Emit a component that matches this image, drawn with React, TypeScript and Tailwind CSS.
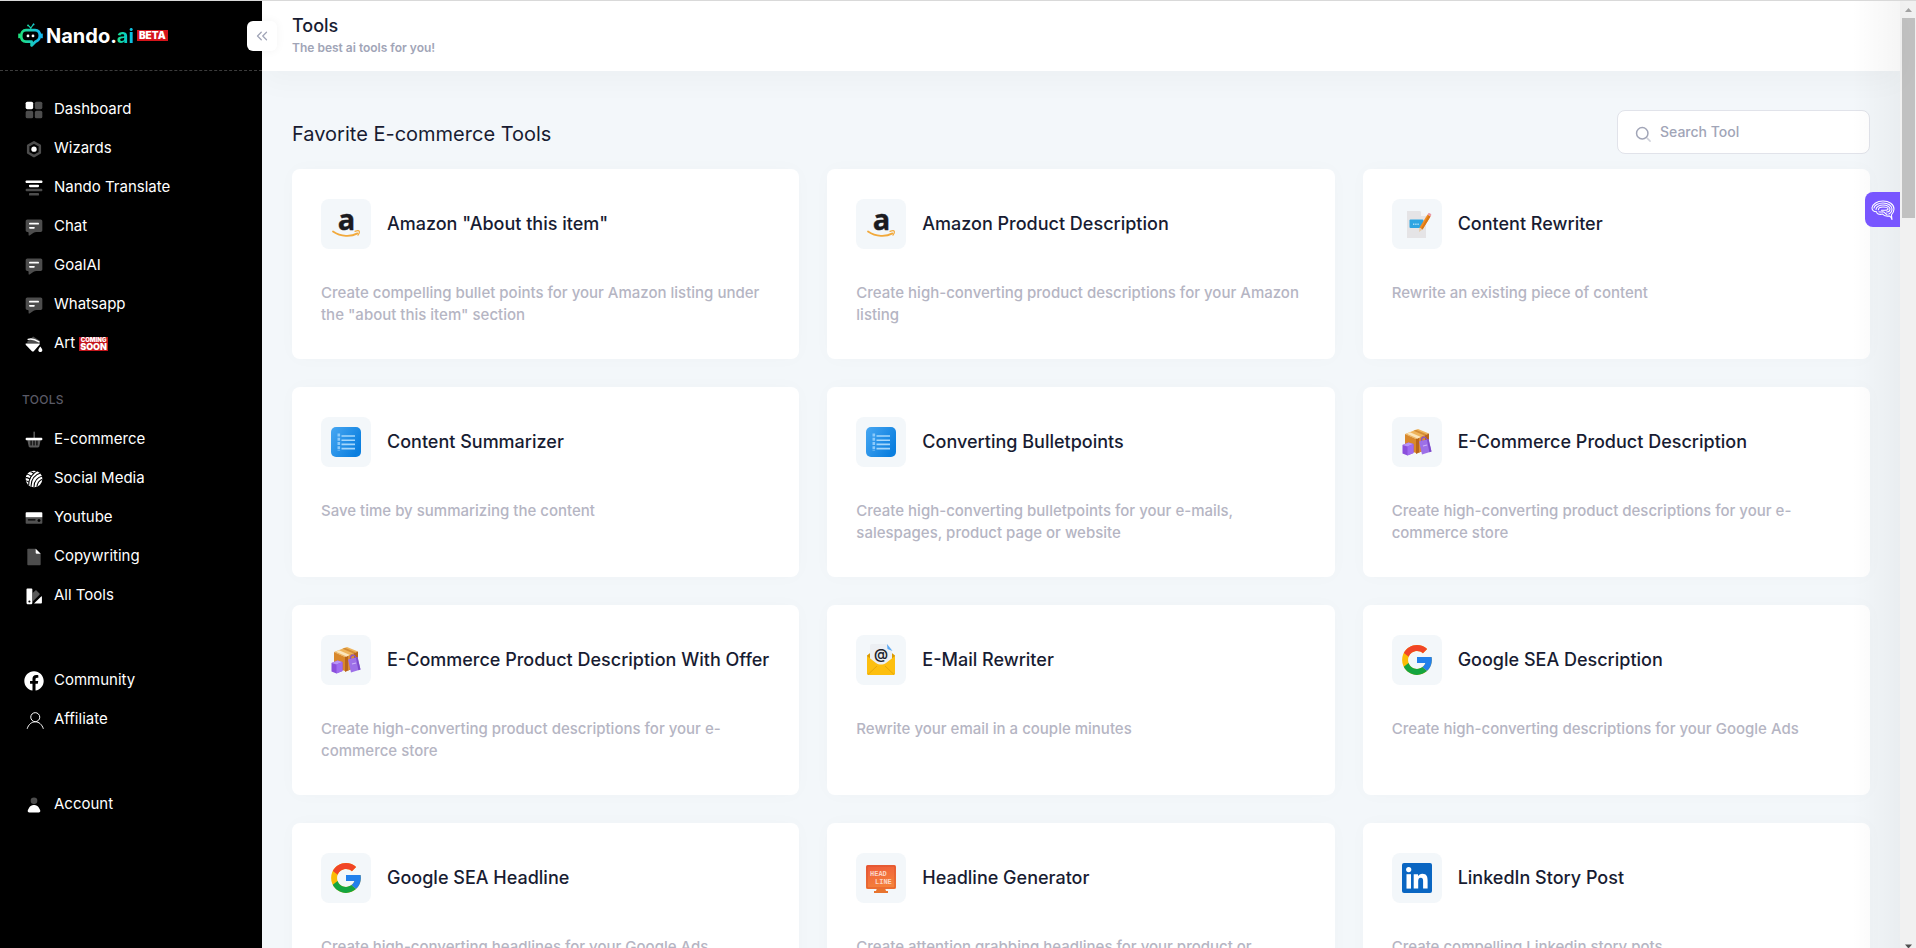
import React from 'react';
import { ChevronsLeft } from 'lucide-react';
import { FaFacebook } from 'react-icons/fa';

interface NavItem {
  label: string;
  icon: React.FC;
  badge?: boolean;
}

interface Tool {
  title: string;
  description: string;
  icon: React.FC;
}

const NavSvg: React.FC<{ children: React.ReactNode }> = ({ children }) => (
  <svg viewBox="0 0 24 24" fill="none" className="w-5 h-5">
    {children}
  </svg>
);

const DashboardIcon = () => (
  <NavSvg>
    <rect x="2" y="2" width="9" height="9" rx="2" fill="white" />
    <rect x="13" y="2" width="9" height="9" rx="2" fill="white" opacity="0.3" />
    <rect x="13" y="13" width="9" height="9" rx="2" fill="white" opacity="0.3" />
    <rect x="2" y="13" width="9" height="9" rx="2" fill="white" opacity="0.3" />
  </NavSvg>
);

const WizardIcon = () => (
  <NavSvg>
    <path d="M12 4L19 8V16.5L12 20.5L5 16.5V8Z" stroke="white" strokeWidth="3" strokeLinejoin="round" opacity="0.3" />
    <circle cx="12" cy="12.2" r="3.2" fill="white" />
  </NavSvg>
);

const TranslateIcon = () => (
  <NavSvg>
    <rect x="2" y="3" width="20" height="3" rx="1" fill="white" />
    <rect x="6" y="8" width="12" height="3" rx="1" fill="white" />
    <rect x="2" y="13" width="20" height="3" rx="1" fill="white" opacity="0.3" />
    <rect x="6" y="18" width="12" height="3" rx="1" fill="white" opacity="0.3" />
  </NavSvg>
);

const ChatIcon = () => (
  <NavSvg>
    <path
      opacity="0.3"
      d="M20 3H4C2.9 3 2 3.9 2 5V16C2 17.1 2.9 18 4 18H4.5C5.05 18 5.5 18.45 5.5 19V21.5C5.5 22.14 6.21 22.53 6.74 22.17L11.49 19C12.47 18.35 13.63 18 14.82 18H20C21.1 18 22 17.1 22 16V5C22 3.9 21.1 3 20 3Z"
      fill="white"
    />
    <rect x="6" y="12" width="7" height="2" rx="1" fill="white" />
    <rect x="6" y="7" width="12" height="2" rx="1" fill="white" />
  </NavSvg>
);

const ArtIcon = () => (
  <NavSvg>
    <path d="M4 9L11 3L19 8V11H4Z" fill="white" opacity="0.3" />
    <path d="M5 6.5C9 5 14 7 18 9.5" stroke="white" strokeWidth="1.6" strokeLinecap="round" />
    <path d="M2 11.5H18.5C19 11.5 19.2 12 18.8 12.5L12 20.3C11.2 21.2 10 21.2 9.2 20.3L2 13Z" fill="white" />
    <path d="M19.5 15C20.8 16.8 22 18 22 19.4C22 20.8 20.9 21.6 19.6 21.6C18.3 21.6 17.2 20.8 17.2 19.4C17.2 18 18.4 16.8 19.5 15Z" fill="white" />
  </NavSvg>
);

const BasketIcon = () => (
  <NavSvg>
    <rect x="11.4" y="2" width="1.6" height="8" fill="white" opacity="0.4" />
    <path
      d="M4 12H20L18.4 19.6C18.3 20.4 17.6 21 16.8 21H7.2C6.4 21 5.7 20.4 5.6 19.6Z"
      fill="white"
      opacity="0.35"
    />
    <path d="M8.5 13V18M12 13V18M15.5 13V18" stroke="black" strokeWidth="1.4" strokeLinecap="round" />
    <rect x="2" y="9.4" width="20" height="3" rx="1" fill="white" />
  </NavSvg>
);

const SocialIcon = () => (
  <NavSvg>
    <clipPath id="social-ball">
      <circle cx="12" cy="12" r="10" />
    </clipPath>
    <circle cx="12" cy="12" r="10" fill="white" />
    <g clipPath="url(#social-ball)" stroke="black" strokeWidth="1.3">
      <path d="M12 23C11.5 15 15 10 23 8" />
      <path d="M15.5 23C15.5 17 18 13.5 23 12" />
      <path d="M8.6 23C7.6 13.5 12 7 22 4" />
      <path d="M5.5 20C5.5 10.5 10 5 18 1" />
      <path d="M1 6C4.5 6 7 7 9 8.8" />
      <path d="M1 10C4 10 5.6 10.6 7.4 12" />
      <path d="M1 14C3.4 14 4.6 14.6 6 15.8" />
      <path d="M6 2.6C8.6 3 10.4 4 12 5.4" />
    </g>
  </NavSvg>
);

const CardIcon = () => (
  <NavSvg>
    <path d="M2 11H22V18C22 18.6 21.6 19 21 19H3C2.4 19 2 18.6 2 18Z" fill="white" opacity="0.32" />
    <rect x="4.5" y="13.4" width="9.5" height="1.6" rx="0.8" fill="black" />
    <circle cx="18" cy="15" r="1.8" fill="black" />
    <path d="M3 5H21C21.6 5 22 5.4 22 6V11H2V6C2 5.4 2.4 5 3 5Z" fill="white" />
  </NavSvg>
);

const FileIcon = () => (
  <NavSvg>
    <path opacity="0.3" d="M19 22H5C4.4 22 4 21.6 4 21V3C4 2.4 4.4 2 5 2H14L20 8V21C20 21.6 19.6 22 19 22Z" fill="white" />
    <path d="M15 8H20L14 2V7C14 7.6 14.4 8 15 8Z" fill="white" />
  </NavSvg>
);

const SwatchIcon = () => (
  <NavSvg>
    <path d="M10.5 8.5L13.6 5.4C14 5 14.6 5 15 5.4L18.6 9C19 9.4 19 10 18.6 10.4L10.5 18.5Z" fill="white" opacity="0.35" />
    <path d="M12 21L20.6 12.6C21 12.2 21.5 12.5 21.5 13V20C21.5 20.6 21.1 21 20.5 21Z" fill="white" />
    <path
      fillRule="evenodd"
      d="M4 3H9C9.6 3 10 3.4 10 4V20C10 21.1 9.1 22 8 22H5C3.9 22 3 21.1 3 20V4C3 3.4 3.4 3 4 3ZM6.5 17.3A1.3 1.3 0 1 0 6.5 19.9A1.3 1.3 0 1 0 6.5 17.3Z"
      fill="white"
    />
  </NavSvg>
);

const FacebookIcon = () => <FaFacebook className="w-5 h-5" />;

const AffiliateIcon = () => (
  <svg viewBox="-2 -2 24 24" fill="none" stroke="white" strokeWidth="1.2" className="w-5 h-5">
    <circle cx="11.5" cy="6.6" r="5.4" />
    <path d="M1.8 20.5C3.4 15.4 7 12.2 11.5 12.2C16 12.2 19.6 15.4 21.2 20.5" />
  </svg>
);

const AccountIcon = () => (
  <NavSvg>
    <rect x="8" y="3" width="8" height="8" rx="4" fill="white" opacity="0.3" />
    <path
      d="M6.3 15.1C7.3 13.2 9.4 12 11.5 12H12.5C14.6 12 16.7 13.2 17.7 15.1L19.3 18C20.1 19.4 19.1 21 17.6 21H6.4C4.9 21 3.9 19.4 4.7 18Z"
      fill="white"
    />
  </NavSvg>
);

const AmazonIcon = () => (
  <svg viewBox="0 0 34 34" className="w-[34px] h-[34px] overflow-visible">
    <text x="17.5" y="22.5" textAnchor="middle" fontFamily="Open Sans, sans-serif" fontWeight="700" fontSize="29" fill="#1b1b1f" stroke="#1b1b1f" strokeWidth="0.4">
      a
    </text>
    <path d="M4 24.5C12 30 22 30 28.5 26.4" stroke="#f2a93b" strokeWidth="1.8" fill="none" strokeLinecap="round" />
    <path d="M26 24.4C28 23.6 30 23.8 30.3 24.3C30.6 25 30 27 29 28.2" stroke="#f2a93b" strokeWidth="1.2" fill="none" strokeLinecap="round" />
  </svg>
);

const RewriterIcon = () => (
  <svg viewBox="0 0 34 34" className="w-[34px] h-[34px]">
    <path d="M7 4H20L26 9V31H7Z" fill="#e5e4e6" />
    <path d="M21 4L26 9H21Z" fill="#f4f4f5" />
    <rect x="9.5" y="12.5" width="14" height="8.5" rx="1" fill="#2fa5e2" />
    <path d="M13 17.2H19" stroke="#a9dcf6" strokeWidth="1.4" strokeDasharray="1.4 0.8" />
    <path d="M27.5 7.5L30.5 9.5L22.5 22.5L19.5 20.5Z" fill="#f08c22" />
    <path d="M28.6 8.2L30.5 9.5L22.5 22.5L21.3 21.6Z" fill="#d97815" />
    <path d="M27.5 7.5L28.4 6.2C29 5.4 31.8 7 31.3 8.1L30.5 9.5Z" fill="#e99aa6" />
    <path d="M19.5 20.5L22.5 22.5L19 25Z" fill="#e8c9a2" />
  </svg>
);

const ListIcon = () => (
  <svg viewBox="0 0 34 34" className="w-[34px] h-[34px]">
    <linearGradient id="list-bg" x1="0" y1="0" x2="1" y2="0.6">
      <stop offset="0" stopColor="#47a7f2" />
      <stop offset="1" stopColor="#0b7fdf" />
    </linearGradient>
    <rect x="2" y="2" width="30" height="30" rx="5" fill="url(#list-bg)" />
    <path d="M12.5 11H26M12.5 15.2H26M12.5 19.4H26M12.5 23.6H26" stroke="#a5d7fb" strokeWidth="1.6" />
    <path d="M9.8 8.6V26" stroke="#8ccafa" strokeWidth="2.6" strokeDasharray="3 1.2" />
  </svg>
);

const PackageIcon = () => (
  <svg viewBox="0 0 34 34" className="w-[34px] h-[34px]">
    <path d="M5 9L18 4L29 8.5L16 14Z" fill="#eeb45c" />
    <path d="M5 9L16 14V28L5 24Z" fill="#d9882b" />
    <path d="M16 14L29 8.5V23L16 29Z" fill="#b96518" />
    <path d="M19 12.7L25 10.2V24.8L19 27.6Z" fill="#d98b37" />
    <path d="M10 7.2L21 12L17.5 13.4L6.8 8.8Z" fill="#fbe6bd" />
    <path d="M13.5 5.8L24.5 10.4L27 9.4L16 4.8Z" fill="#d48d35" />
    <path d="M2.5 20L8.5 17.6L13.5 19V28L7.5 30.4L2.5 28.6Z" fill="#8b4fdc" />
    <path d="M2.5 20L8.5 17.6L13.5 19L7.5 21.6Z" fill="#b995f5" />
    <path d="M7.5 21.6L13.5 19V28L7.5 30.4Z" fill="#a06cf0" />
    <path d="M19 16.5L28.5 14L31.5 26.5L22 29.5Z" fill="#9d70e8" />
    <path d="M28.5 14L31.5 26.5L29.4 27.2L27 14.4Z" fill="#7d4bcb" />
    <path d="M21.5 16C21 11.5 26 10.5 26.6 14.6" stroke="#8650cf" strokeWidth="1.2" fill="none" />
    <path d="M23 21L27 20" stroke="#cdb5f7" strokeWidth="1.2" />
  </svg>
);

const MailIcon = () => (
  <svg viewBox="0 0 34 34" className="w-[34px] h-[34px]">
    <path d="M3 12.5L8 8.5H26L31 12.5V30C31 31.1 30.1 32 29 32H5C3.9 32 3 31.1 3 30Z" fill="#d99a06" />
    <path d="M8 1H23L28 6V22H6V3C6 1.9 6.9 1 8 1Z" fill="#eceff3" />
    <path d="M23 1L28.5 8L23.5 6Z" fill="#5aa9f5" />
    <text x="17" y="16" textAnchor="middle" fontFamily="Inter, sans-serif" fontWeight="600" fontSize="14" fill="#22252d">
      @
    </text>
    <path d="M3 13L12 20C15 22 19 22 22 20L31 13V30C31 31.1 30.1 32 29 32H5C3.9 32 3 31.1 3 30Z" fill="#fdbf0f" />
    <path d="M4 31.5L13 23M30 31.5L21 23" stroke="#e7a70a" strokeWidth="1" />
  </svg>
);

const GoogleIcon = () => (
  <svg viewBox="2.5 2.5 43 43" className="w-8 h-8">
    <path
      fill="#fbbc05"
      d="M43.611 20.083H42V20H24v8h11.303c-1.649 4.657-6.08 8-11.303 8c-6.627 0-12-5.373-12-12c0-6.627 5.373-12 12-12c3.059 0 5.842 1.154 7.961 3.039l5.657-5.657C34.046 6.053 29.268 4 24 4C12.955 4 4 12.955 4 24c0 11.045 8.955 20 20 20c11.045 0 20-8.955 20-20C44 22.659 43.862 21.35 43.611 20.083z"
    />
    <path
      fill="#f14527"
      d="M6.306 14.691l6.571 4.819C14.655 15.108 18.961 12 24 12c3.059 0 5.842 1.154 7.961 3.039l5.657-5.657C34.046 6.053 29.268 4 24 4C16.318 4 9.656 8.337 6.306 14.691z"
    />
    <path
      fill="#14a53f"
      d="M24 44c5.166 0 9.86-1.977 13.409-5.192l-6.19-5.238C29.211 35.091 26.715 36 24 36c-5.202 0-9.619-3.317-11.283-7.946l-6.522 5.025C9.505 39.556 16.227 44 24 44z"
    />
    <path
      fill="#2280ec"
      d="M43.611 20.083H42V20H24v8h11.303c-0.792 2.237-2.231 4.166-4.087 5.571l6.193 5.236C36.971 39.205 44 34 44 24C44 22.659 43.862 21.35 43.611 20.083z"
    />
  </svg>
);

const HeadlineIcon = () => (
  <svg viewBox="0 0 34 34" className="w-[34px] h-[34px]">
    <linearGradient id="headline-bg" x1="0" y1="0" x2="0.3" y2="1">
      <stop offset="0" stopColor="#ee5a3c" />
      <stop offset="1" stopColor="#f5813a" />
    </linearGradient>
    <path d="M13 27H21L22 30H24V32H10V30H12Z" fill="#e8742e" />
    <rect x="2" y="4" width="30" height="24" rx="1.5" fill="url(#headline-bg)" />
    <rect x="3" y="5" width="28" height="22" rx="1" fill="none" stroke="#d9502a" strokeWidth="0.8" />
    <text x="6" y="15" fontFamily="Liberation Mono, monospace" fontWeight="700" fontSize="7" fill="#fbd5c4">
      HEAD
    </text>
    <text x="11" y="23" fontFamily="Liberation Mono, monospace" fontWeight="700" fontSize="7" fill="#fbd5c4">
      LINE
    </text>
  </svg>
);

const LinkedinIcon = () => (
  <svg viewBox="0 0 34 34" className="w-[34px] h-[34px]">
    <rect x="2" y="2" width="30" height="30" rx="2" fill="#0a66c2" />
    <circle cx="8.7" cy="8.6" r="2.6" fill="white" />
    <rect x="6.5" y="13.2" width="4.5" height="14.4" fill="white" />
    <path
      d="M13.7 13.2H18V15.2C18.8 13.8 20.4 12.8 22.4 12.8C26.6 12.8 27.6 15.6 27.6 19.4V27.6H23.1V20.4C23.1 18.6 23 16.8 20.8 16.8C18.7 16.8 18.2 18.5 18.2 20.2V27.6H13.7Z"
      fill="white"
    />
  </svg>
);

const SearchIcon = () => (
  <svg viewBox="0 0 24 24" fill="none" stroke="#a1a5b7" strokeLinecap="round" className="w-[18px] h-[18px]">
    <circle cx="11" cy="11" r="7.6" strokeWidth="2" />
    <path d="M17.5 17.5L21.5 21.5" strokeWidth="2" opacity="0.5" />
  </svg>
);

const BrainIcon = () => (
  <svg viewBox="0 0 24 24" fill="none" stroke="white" strokeWidth="1.1" strokeLinecap="round" strokeLinejoin="round" className="w-6 h-6">
    <path d="M21 21.5C20.6 20 19.8 18.8 18.5 18C14.5 18.6 12.6 17.6 11.6 16C8 17 5.4 15.6 5.6 13.8C2.6 13.6 0.8 12 1 9.8C1.2 6.6 5.6 3 12 3C18 3 23 6.4 23 11C23 13.6 21.6 15.6 20.4 16.8L21 21.5Z" />
    <path d="M3 10C3.2 7.2 7.4 5 12 5C17 5 21 7.6 21 11C21 13.6 19.6 15.2 17.8 16" />
    <path d="M5 11.6C5 9 8.4 7 12 7C16 7 19 8.8 19 11C19 13 17.6 14 15.6 14" />
    <path d="M7.4 11.8C7.4 10 9.6 9 12 9C14.6 9 17 9.8 17 11C17 12.2 15.4 12.2 14 12.2H10.4" />
    <path d="M8 13.8C9.6 14.4 11 13.6 12.6 14C14 14.6 14.4 16 16 16.4" />
  </svg>
);

const RobotLogo = () => (
  <svg viewBox="0 0 25 25" fill="none" className="w-[25px] h-[25px]">
    <linearGradient id="robot" x1="0" y1="0" x2="1" y2="0">
      <stop offset="0" stopColor="#1fe07f" />
      <stop offset="1" stopColor="#14b9ee" />
    </linearGradient>
    <path d="M12.8 6.5V4.6M12.8 5L10.2 2.4M12.8 5L15.6 1.2" stroke="#19cdb5" strokeWidth="1.2" strokeLinecap="round" />
    <circle cx="10" cy="2.4" r="0.9" fill="#1cd79b" />
    <circle cx="15.6" cy="1.4" r="0.9" fill="#17c4d4" />
    <path
      d="M8 7.2H17C20 7.2 21.8 9.4 21.8 12.6C21.8 15.8 20 18 17.6 18.6L13.6 22.4V18.6H8C5 18.6 3.2 16.4 3.2 13C3.2 9.6 5 7.2 8 7.2Z"
      stroke="url(#robot)"
      strokeWidth="2.7"
      strokeLinejoin="round"
    />
    <path d="M1.2 10.6V15.2" stroke="#1fe07f" strokeWidth="2" />
    <path d="M23.8 10.6V15.2" stroke="#14b9ee" strokeWidth="2" />
    <circle cx="10" cy="12.9" r="1.4" fill="white" />
    <circle cx="15" cy="12.9" r="1.4" fill="white" />
  </svg>
);

const mainItems: NavItem[] = [
  { label: 'Dashboard', icon: DashboardIcon },
  { label: 'Wizards', icon: WizardIcon },
  { label: 'Nando Translate', icon: TranslateIcon },
  { label: 'Chat', icon: ChatIcon },
  { label: 'GoalAI', icon: ChatIcon },
  { label: 'Whatsapp', icon: ChatIcon },
  { label: 'Art', icon: ArtIcon, badge: true },
];

const toolItems: NavItem[] = [
  { label: 'E-commerce', icon: BasketIcon },
  { label: 'Social Media', icon: SocialIcon },
  { label: 'Youtube', icon: CardIcon },
  { label: 'Copywriting', icon: FileIcon },
  { label: 'All Tools', icon: SwatchIcon },
];

const linkItems: NavItem[] = [
  { label: 'Community', icon: FacebookIcon },
  { label: 'Affiliate', icon: AffiliateIcon },
];

const accountItems: NavItem[] = [{ label: 'Account', icon: AccountIcon }];

const tools: Tool[] = [
  {
    title: 'Amazon "About this item"',
    description: 'Create compelling bullet points for your Amazon listing under the "about this item" section',
    icon: AmazonIcon,
  },
  {
    title: 'Amazon Product Description',
    description: 'Create high-converting product descriptions for your Amazon listing',
    icon: AmazonIcon,
  },
  { title: 'Content Rewriter', description: 'Rewrite an existing piece of content', icon: RewriterIcon },
  { title: 'Content Summarizer', description: 'Save time by summarizing the content', icon: ListIcon },
  {
    title: 'Converting Bulletpoints',
    description: 'Create high-converting bulletpoints for your e-mails, salespages, product page or website',
    icon: ListIcon,
  },
  {
    title: 'E-Commerce Product Description',
    description: 'Create high-converting product descriptions for your e-commerce store',
    icon: PackageIcon,
  },
  {
    title: 'E-Commerce Product Description With Offer',
    description: 'Create high-converting product descriptions for your e-commerce store',
    icon: PackageIcon,
  },
  { title: 'E-Mail Rewriter', description: 'Rewrite your email in a couple minutes', icon: MailIcon },
  {
    title: 'Google SEA Description',
    description: 'Create high-converting descriptions for your Google Ads',
    icon: GoogleIcon,
  },
  {
    title: 'Google SEA Headline',
    description: 'Create high-converting headlines for your Google Ads',
    icon: GoogleIcon,
  },
  {
    title: 'Headline Generator',
    description: 'Create attention grabbing headlines for your product or service',
    icon: HeadlineIcon,
  },
  { title: 'LinkedIn Story Post', description: 'Create compelling Linkedin story pots', icon: LinkedinIcon },
];

const NavList: React.FC<{ items: NavItem[] }> = ({ items }) => (
  <ul>
    {items.map(({ label, icon: Icon, badge }) => (
      <li key={label}>
        <a href="#" className="flex h-[39px] items-center gap-2.5 px-6 text-[15px] text-white">
          <Icon />
          <span>{label}</span>
          {badge && (
            <span className="-ml-1.5 flex flex-col items-center bg-[#c4161c] px-px text-center font-black text-white">
              <span className="text-[6px] leading-[6px]">COMING</span>
              <span className="text-[9px] leading-[8px]">SOON</span>
            </span>
          )}
        </a>
      </li>
    ))}
  </ul>
);

const Sidebar = () => (
  <aside className="relative z-20 w-[262px] shrink-0 bg-black">
    <div className="flex h-[70px] items-center border-b border-dashed border-[#3c3c3c] px-[18px]">
      <a href="#" className="flex items-center gap-[3px]">
        <RobotLogo />
        <span className="text-xl font-bold leading-6 text-white">
          Nando.
          <span className="bg-gradient-to-r from-[#1fe08a] to-[#14b9ee] bg-clip-text text-transparent">ai</span>
        </span>
        <span className="bg-[#d5141b] px-0.5 text-[10px] font-black leading-[11px] text-white">BETA</span>
      </a>
    </div>
    <button
      type="button"
      aria-label="Collapse sidebar"
      className="absolute -right-[15px] top-5 flex h-[30px] w-[30px] items-center justify-center rounded-md bg-white shadow-[0_0_10px_rgba(0,0,0,0.05)]"
    >
      <ChevronsLeft className="h-[18px] w-[18px] text-[#a1a5b7]" strokeWidth={1.75} />
    </button>
    <nav className="pt-[19px]">
      <NavList items={mainItems} />
      <h4 className="px-[22px] pb-[11px] pt-7 text-xs font-medium leading-[18px] tracking-wide text-[#5a5a66]">TOOLS</h4>
      <NavList items={toolItems} />
      <div className="mt-[46px]">
        <NavList items={linkItems} />
      </div>
      <div className="mt-[46px]">
        <NavList items={accountItems} />
      </div>
    </nav>
  </aside>
);

const ToolCard: React.FC<{ tool: Tool }> = ({ tool }) => {
  const Icon = tool.icon;
  return (
    <a href="#" className="block rounded-lg bg-white px-[29px] pb-[33px] pt-[30px] shadow-[0_0_20px_rgba(76,87,125,0.02)]">
      <div className="flex items-center gap-4">
        <span className="flex h-[50px] w-[50px] shrink-0 items-center justify-center rounded-lg bg-[#f3f7fa]">
          <Icon />
        </span>
        <h3 className="whitespace-nowrap text-lg leading-7 font-medium text-[#181c32]">{tool.title}</h3>
      </div>
      <p className="mt-[33px] min-h-11 text-[15px] font-medium leading-[22px] text-[#b5b5c3]">{tool.description}</p>
    </a>
  );
};

const Scrollbar = () => (
  <div aria-hidden="true" className="flex w-4 shrink-0 flex-col items-center justify-between bg-[#f1f1f1]">
    <div>
      <svg viewBox="0 0 16 17" className="h-[17px] w-4">
        <path d="M8.5 7L12 11H5Z" fill="#a3a3a3" />
      </svg>
      <div className="mx-auto h-[200px] w-[13px] bg-[#c1c1c1]" />
    </div>
    <svg viewBox="0 0 16 17" className="h-[17px] w-4">
      <path d="M5 13.5H12L8.5 17.5Z" fill="#505050" />
    </svg>
  </div>
);

export default function App() {
  return (
    <div className="flex h-screen overflow-hidden border-t border-[#d9d9d9] bg-[#f3f7fa] font-['Inter',sans-serif]">
      <Sidebar />
      <div className="relative flex min-w-0 flex-1 flex-col">
        <header className="relative z-10 flex h-[70px] shrink-0 flex-col justify-center bg-white px-[30px] shadow-[0_10px_30px_rgba(0,0,0,0.03)]">
          <h1 className="text-lg font-medium leading-6 text-[#181c32]">Tools</h1>
          <p className="text-xs font-semibold leading-5 text-[#a1a5b7]">The best ai tools for you!</p>
        </header>
        <main className="min-h-0 flex-1 overflow-hidden px-[30px] pt-[39px]">
          <div className="flex items-start justify-between pb-[11px]">
            <h2 className="text-xl leading-[48px] text-[#181c32]">Favorite E-commerce Tools</h2>
            <label className="flex h-11 w-[253px] items-center gap-2 rounded-lg border border-[#e1e3ea] bg-white px-4">
              <span className="pt-1">
                <SearchIcon />
              </span>
              <input
                type="text"
                aria-label="Search Tool"
                placeholder="Search Tool"
                className="w-full min-w-0 text-sm font-medium text-[#5e6278] outline-none placeholder:text-[#a1a5b7]"
              />
            </label>
          </div>
          <div className="grid grid-cols-3 gap-7">
            {tools.map((tool) => (
              <ToolCard key={tool.title} tool={tool} />
            ))}
          </div>
        </main>
        <div className="pointer-events-none absolute inset-y-0 right-0 z-10 w-12 bg-gradient-to-r from-transparent to-black/4" />
        <button
          type="button"
          aria-label="Open assistant"
          className="absolute right-0 top-[191px] z-20 flex h-[35px] w-[35px] items-center justify-center rounded-l-lg bg-[#7856ff]"
        >
          <BrainIcon />
        </button>
      </div>
      <Scrollbar />
    </div>
  );
}
